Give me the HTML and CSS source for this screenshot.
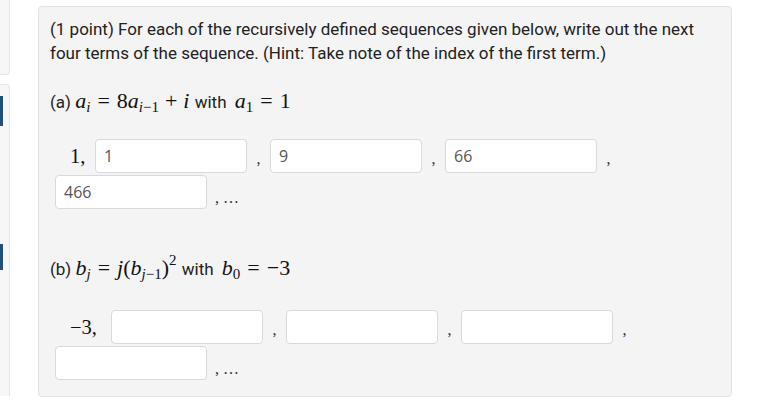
FILE: index.html
```html
<!DOCTYPE html>
<html>
<head>
<meta charset="utf-8">
<link rel="stylesheet" href="styles.css">
</head>
<body>
<div class="page">
  <aside class="side">
    <div class="side-top"></div>
    <div class="side-main">
      <div class="mark mark-a"></div>
      <div class="mark mark-b"></div>
    </div>
  </aside>
  <main class="problem">
    <p class="intro">(1 point) For each of the recursively defined sequences given below, write out the next four terms of the sequence. (Hint: Take note of the index of the first term.)</p>

    <p class="part part-a">(a) <span class="m"><i>a</i><sub><i>i</i></sub><span class="rel">=</span>8<i>a</i><sub><i>i</i>−1</sub><span class="bin">+</span><i>i</i></span> <span class="with">with</span> <span class="m"><i>a</i><sub>1</sub><span class="rel">=</span>1</span></p>

    <div class="answers">
      <div class="row first">
        <span class="m lead">1,</span>
        <span class="box">1</span><span class="comma">,</span>
        <span class="box">9</span><span class="comma">,</span>
        <span class="box">66</span><span class="comma">,</span>
      </div>
      <div class="row">
        <span class="box">466</span><span class="dots">,…</span>
      </div>
    </div>

    <p class="part part-b">(b) <span class="m"><i>b</i><sub><i>j</i></sub><span class="rel">=</span><i>j</i>(<i>b</i><sub><i>j</i>−1</sub>)<sup>2</sup></span> <span class="with">with</span> <span class="m"><i>b</i><sub>0</sub><span class="rel">=</span>−3</span></p>

    <div class="answers">
      <div class="row first">
        <span class="m lead lead-b">−3,</span>
        <span class="box"></span><span class="comma">,</span>
        <span class="box"></span><span class="comma">,</span>
        <span class="box"></span><span class="comma">,</span>
      </div>
      <div class="row">
        <span class="box"></span><span class="dots">,…</span>
      </div>
    </div>
  </main>
</div>
</body>
</html>
```

FILE: styles.css
```css
html, body {
  margin: 0;
  padding: 0;
  background: #ffffff;
}

.page {
  display: flex;
  align-items: flex-start;
  width: 779px;
  height: 401px;
  overflow: hidden;
}

.side {
  width: 10px;
  flex: none;
  display: flex;
  flex-direction: column;
  gap: 9px;
}

.side-top {
  height: 75px;
  background: #f7f7f7;
  border-right: 1px solid #e6e6e6;
  border-bottom: 1px solid #e6e6e6;
  border-bottom-right-radius: 4px;
  box-sizing: border-box;
}

.side-main {
  height: 312px;
  background: #f7f7f7;
  border-right: 1px solid #e6e6e6;
  border-top: 1px solid #e6e6e6;
  border-top-right-radius: 4px;
  box-sizing: border-box;
  padding-top: 11px;
}

.mark {
  width: 3px;
  background: #24507a;
}

.mark-a {
  height: 30px;
}

.mark-b {
  height: 26px;
  margin-top: 118px;
}

.problem {
  margin-left: 28px;
  margin-top: 6px;
  width: 694px;
  height: 391px;
  flex: none;
  box-sizing: border-box;
  background: #f4f4f4;
  border: 1px solid #e2e2e2;
  border-radius: 4px;
  padding: 10px 11px 0 11px;
  font-family: Roboto, "Liberation Sans", sans-serif;
  font-size: 17px;
  color: #222222;
}

.intro {
  margin: 0;
  line-height: 24px;
}

.part {
  margin: 0;
  line-height: 24px;
}

.part-a {
  margin-top: 24px;
}

.part-b {
  margin-top: 47px;
}

.m {
  font-family: "Liberation Serif", "DejaVu Serif", serif;
  font-size: 22px;
  color: #111111;
}

.m sub {
  font-size: 15px;
  vertical-align: -4px;
  line-height: 0;
}

.m sup {
  font-size: 15px;
  vertical-align: 10px;
  line-height: 0;
}

.rel {
  margin: 0 7px;
}

.bin {
  margin: 0 6px;
}

.with {
  margin: 0 4px 0 1px;
}

.answers {
  display: flex;
  flex-direction: column;
  gap: 2px;
  padding-left: 5px;
}

.part-a + .answers {
  margin-top: 25px;
}

.part-b + .answers {
  margin-top: 29px;
}

.row {
  display: flex;
  align-items: center;
}

.lead {
  margin-left: 15px;
  width: 25px;
  font-size: 20.5px;
}

.lead-b {
  width: 41px;
}

.box {
  width: 152px;
  height: 34px;
  box-sizing: border-box;
  background: #ffffff;
  border: 1px solid #d9d9d9;
  border-radius: 4px;
  padding-left: 8px;
  font-family: "Open Sans", "DejaVu Sans", sans-serif;
  font-size: 16px;
  line-height: 32px;
  color: #555555;
}

.comma {
  width: 23px;
  text-align: center;
  font-family: "Liberation Serif", serif;
  font-size: 16px;
  padding-top: 6px;
  color: #333333;
}

.dots {
  margin-left: 8px;
  font-family: "Liberation Serif", serif;
  font-size: 16px;
  padding-top: 12px;
  letter-spacing: 4px;
  color: #333333;
}
```
